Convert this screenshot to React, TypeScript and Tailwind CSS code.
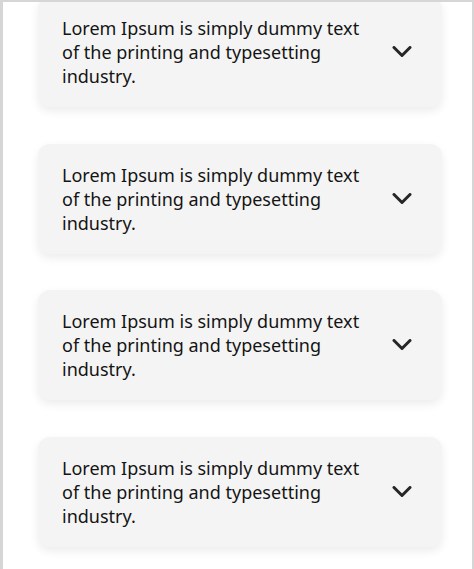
import React from 'react';

const items = [1, 2, 3, 4];

function Chevron() {
  return (
    <svg width="20" height="12" viewBox="0 0 20 12" className="shrink-0">
      <polyline
        points="2,1.5 10,9.5 18,1.5"
        fill="none"
        stroke="#262626"
        strokeWidth="3"
        strokeLinecap="round"
        strokeLinejoin="round"
      />
    </svg>
  );
}

function FaqCard() {
  return (
    <div className="flex items-center justify-between rounded-[12px] bg-[#f4f4f4] py-[19px] pl-[24px] pr-[30px] shadow-[0_4px_10px_rgba(0,0,0,0.08)]">
      <p className="w-[305px] text-[18px] leading-[24px] text-[#141414]">
        Lorem Ipsum is simply dummy text of the printing and typesetting industry.
      </p>
      <Chevron />
    </div>
  );
}

export default function App() {
  return (
    <div
      className="h-[569px] w-[474px] overflow-hidden border-l-[3px] border-r-[2px] border-t-[2px] border-[#d6d6d6] bg-white"
      style={{ fontFamily: '"Noto Sans", "Open Sans", sans-serif' }}
    >
      <div className="-mt-[5px] flex flex-col gap-[36.5px] pl-[35px] pr-[30px]">
        {items.map((i) => (
          <FaqCard key={i} />
        ))}
      </div>
    </div>
  );
}
